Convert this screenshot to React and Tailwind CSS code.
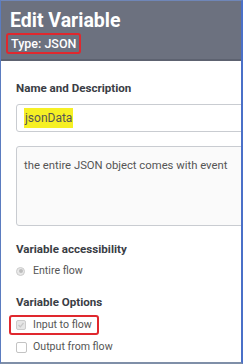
export default function App() {
  return (
    <div className="w-[243px] h-[364px] overflow-hidden bg-white border-l border-t border-r-2 border-b-2 border-l-[#5b7cc0] border-t-[#6f86b8] border-r-[#4a70c8] border-b-[#7f8fa8] flex flex-col" style={{ fontFamily: "Roboto, 'Liberation Sans', sans-serif" }}>
      <div className="h-[60px] bg-[#6c717f] border-b-2 border-[#5d6270] pl-[9px] pt-[8px] shrink-0">
        <div className="text-white font-bold text-[19.5px] leading-[24px]">Edit Variable</div>
        <div className="-ml-[4px] h-[21px] flex w-fit items-center border-[2.5px] border-[#e0282e] rounded-[3px] px-[3px]">
          <div className="text-white font-medium text-[12.5px] leading-[14px]">Type: JSON</div>
        </div>
      </div>
      <div className="flex-1 pl-[15px] w-[260px]">
        <div className="mt-[20px] text-[11.6px] font-bold text-[#3a3d45] leading-[14px]">Name and Description</div>
        <div className="mt-[9px] h-[28px] border border-[#c9ccd1] rounded-[3px] flex items-center pl-[7px] bg-white">
          <span className="bg-[#f6f024] text-[#555] text-[12px] leading-[20px] px-[1px]">jsonData</span>
        </div>
        <div className="mt-[14px] h-[80px] border border-[#c9ccd1] bg-[#fafafa] rounded-[3px] pl-[7px] pt-[5px]">
          <span className="text-[#555] text-[11.3px] leading-[14px]">the entire JSON object comes with event</span>
        </div>
        <div className="mt-[16px] text-[11.6px] font-bold text-[#3a3d45] leading-[14px]">Variable accessibility</div>
        <div className="mt-[8px] flex items-center">
          <div className="w-[9px] h-[9px] rounded-full border border-[#ccc] bg-[#e8e8e8] flex items-center justify-center">
            <div className="w-[4px] h-[4px] rounded-full bg-[#bdbdbd]" />
          </div>
          <span className="text-[10.6px] text-[#555] leading-[14px] ml-[8px]">Entire flow</span>
        </div>
        <div className="mt-[17px] text-[11.6px] font-bold text-[#3a3d45] leading-[14px]">Variable Options</div>
        <div className="mt-[6px] -ml-[7px] flex w-fit items-center border-[2.5px] border-[#e0282e] rounded-[3px] pl-[5px] pr-[5px] h-[20px]">
          <div className="w-[10px] h-[10px] rounded-[2px] border border-[#ccc] bg-[#e6e6e6] flex items-center justify-center">
            <svg width="8" height="8" viewBox="0 0 8 8"><path d="M1.5 4 L3.3 5.8 L6.5 2" stroke="#c8c8c8" strokeWidth="1.3" fill="none" /></svg>
          </div>
          <span className="text-[10.6px] text-[#555] leading-[14px] ml-[7px]">Input to flow</span>
        </div>
        <div className="mt-[5px] flex items-center">
          <div className="w-[11px] h-[11px] rounded-[2px] border border-[#c3c3c3] bg-white" />
          <span className="text-[10.6px] text-[#555] leading-[14px] ml-[6px]">Output from flow</span>
        </div>
      </div>
    </div>
  );
}
